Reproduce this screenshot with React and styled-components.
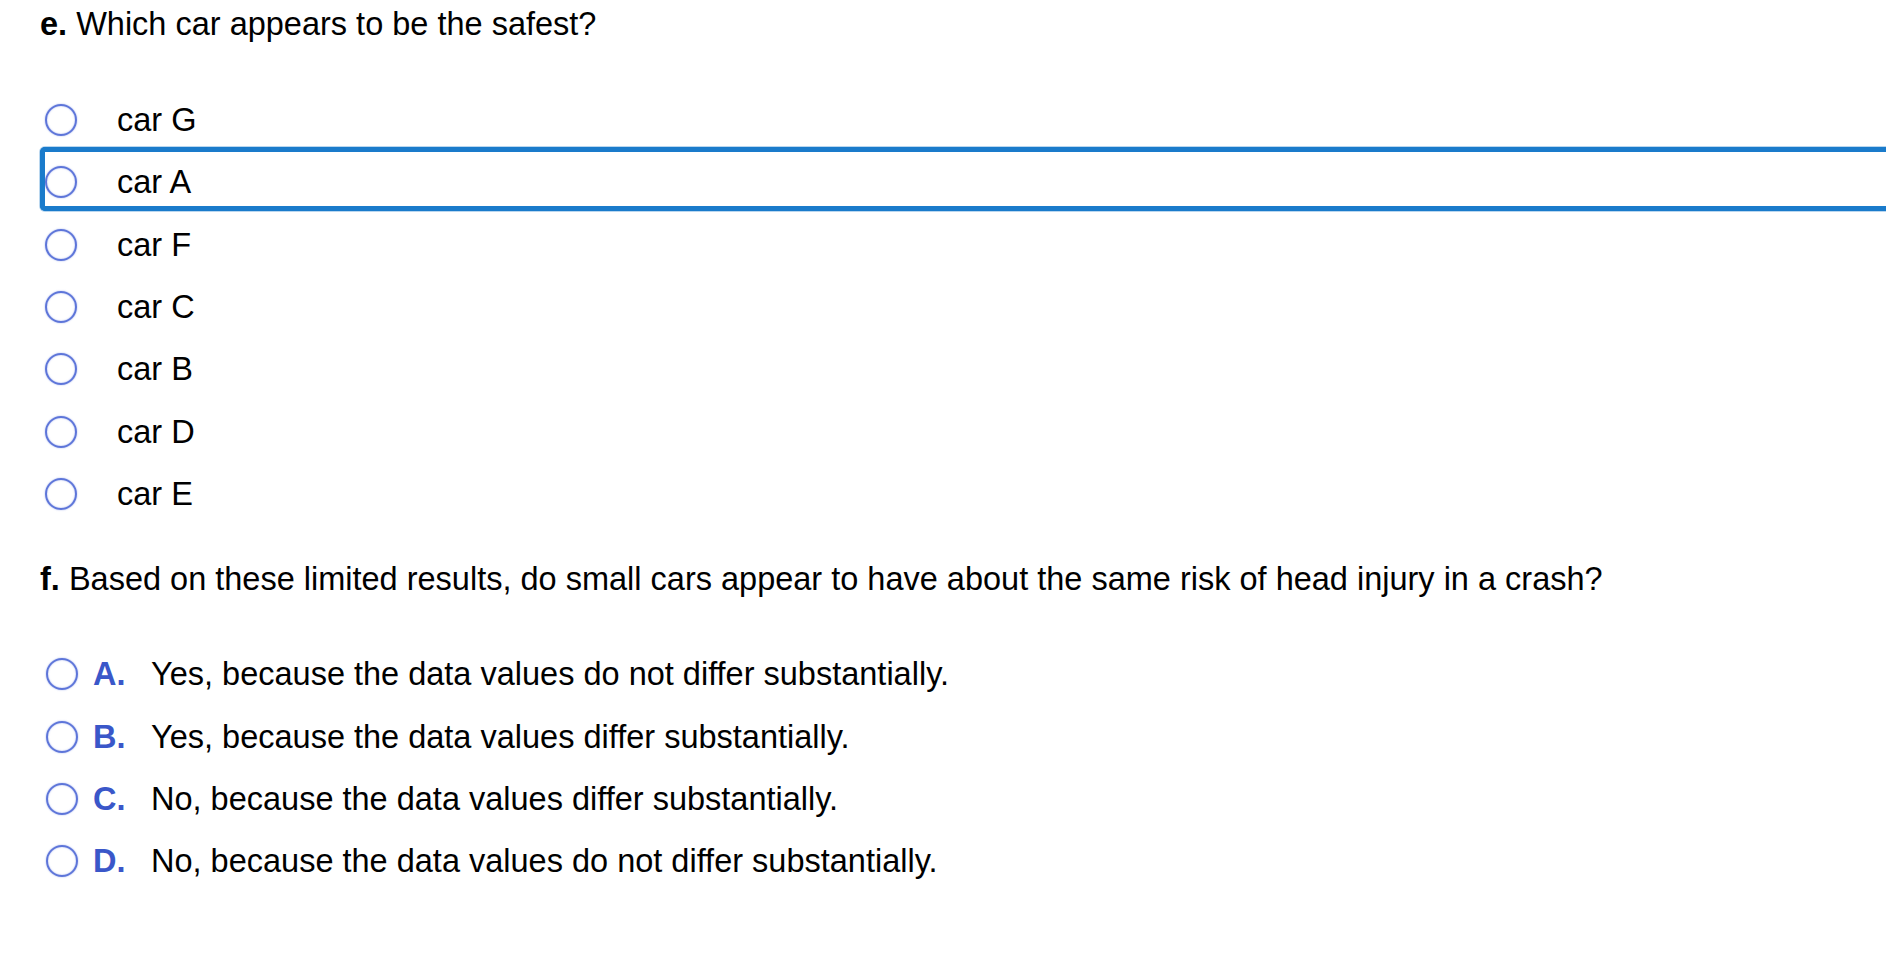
import React from 'react'
import styled, { createGlobalStyle } from 'styled-components'

const GlobalStyle = createGlobalStyle`
    html, body {
        margin: 0;
        padding: 0;
        background: #fff;
        overflow: hidden;
    }
    body {
        font-family: "Liberation Sans", Arial, sans-serif;
        color: #000;
    }
`

const Page = styled.div`
    width: 1886px;
    height: 960px;
    padding-left: 40px;
    box-sizing: border-box;
`

const Question = styled.div`
    font-size: 32.5px;
    line-height: 36px;
    padding-top: ${({ $top }) => $top || 0}px;
    margin-top: ${({ $gap }) => $gap || 0}px;
    white-space: nowrap;
    b {
        font-weight: 700;
    }
`

const List = styled.div`
    display: flex;
    flex-direction: column;
    margin-top: ${({ $gap }) => $gap}px;
`

const Row = styled.div`
    position: relative;
    display: flex;
    align-items: center;
    height: ${({ $h }) => $h}px;
    padding-left: ${({ $pad }) => $pad}px;
    font-size: 32.5px;
    line-height: 36px;

    ${({ $selected }) => $selected && `
        &::after {
            content: '';
            position: absolute;
            top: -4px;
            left: 0;
            right: -40px;
            height: 64px;
            box-sizing: border-box;
            border: 5px solid #1a7bcb;
            border-right: none;
            border-radius: 5px 0 0 5px;
            box-shadow: 0 0 0 1px rgba(26, 123, 203, 0.3);
            pointer-events: none;
        }
    `}
`

const Radio = styled.span`
    flex: none;
    width: 32px;
    height: 32px;
    box-sizing: border-box;
    border-radius: 50%;
    border: 2.5px solid #5d75d9;
    box-shadow: 0 0 1.5px rgba(90, 115, 220, 0.7), inset 0 0 1.5px rgba(90, 115, 220, 0.7);
`

const Label = styled.span`
    margin-left: 40px;
`

const Letter = styled.span`
    margin-left: 15px;
    width: 30px;
    font-weight: 700;
    color: #3a57c9;
`

const OptionText = styled.span`
    margin-left: 28px;
`

const cars = ['car G', 'car A', 'car F', 'car C', 'car B', 'car D', 'car E']

const answers = [
    ['A.', 'Yes, because the data values do not differ substantially.'],
    ['B.', 'Yes, because the data values differ substantially.'],
    ['C.', 'No, because the data values differ substantially.'],
    ['D.', 'No, because the data values do not differ substantially.'],
]

const App = () => {
  return (
    <>
      <GlobalStyle />
      <Page>
        <Question $top={6}>
            <b>e.</b> Which car appears to be the safest?
        </Question>
        <List $gap={47}>
            {cars.map((car) => (
                <Row key={car} $h={62.3} $pad={5} $selected={car === 'car A'}>
                    <Radio />
                    <Label>{car}</Label>
                </Row>
            ))}
        </List>
        <Question $gap={36}>
            <b>f.</b> Based on these limited results, do small cars appear to have about the same risk of head injury in a crash?
        </Question>
        <List $gap={46}>
            {answers.map(([letter, text]) => (
                <Row key={letter} $h={62.3} $pad={6}>
                    <Radio />
                    <Letter>{letter}</Letter>
                    <OptionText>{text}</OptionText>
                </Row>
            ))}
        </List>
      </Page>
    </>
  )
}

export default App
